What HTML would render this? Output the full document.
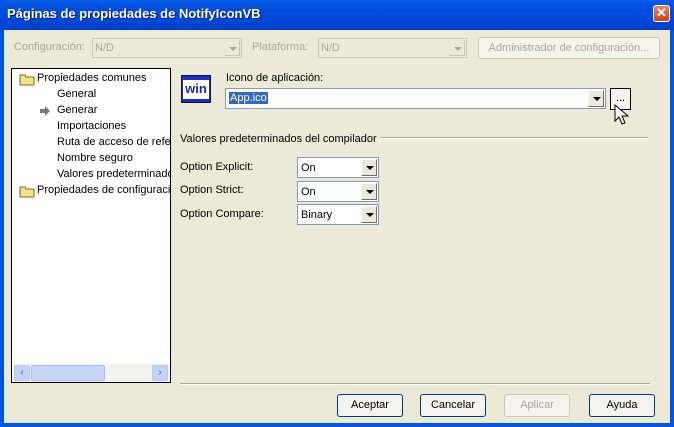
<!DOCTYPE html>
<html><head><meta charset="utf-8"><style>
*{margin:0;padding:0;box-sizing:border-box}
body{width:674px;height:427px;overflow:hidden;font-family:"Liberation Sans",sans-serif;font-size:11px;color:#000;background:#0054e3;position:relative}
.a{position:absolute}
.title{left:0;top:0;width:674px;height:30px;background:linear-gradient(#0a5fe8,#0151e0 20%,#0047d8 70%,#0040c8);border-radius:7px 7px 0 0}
.tt{left:7px;top:6px;color:#fff;font-weight:bold;font-size:13px;text-shadow:1px 1px #0a1e7a}
.close{left:653px;top:5px;width:17px;height:17px;background:linear-gradient(#e6866a,#c8421c);border:1px solid #fff;border-radius:3px;color:#fff;font-weight:bold;font-size:13px;text-align:center;line-height:14px}
.body{left:4px;top:30px;width:666px;height:393px;background:#ece9d8}
.combo{background:#fff;border:1px solid #7f9db9}
.dis{background:#ece9d8;border:1px solid #c9c7ba}
.arr{position:absolute;right:1px;top:1px;bottom:1px;width:16px;background:#ece9d8;border:1px solid;border-color:#fff #716f64 #716f64 #fff}
.arr:after{content:"";position:absolute;left:4px;top:6px;border:4px solid transparent;border-top:4px solid #000;border-bottom:0}
.arr.g:after{border-top-color:#aca899}
.btn{background:#f4f3ee;border:1px solid #003c74;border-radius:3px;text-align:center;line-height:21px}
.gray{color:#aca899}
.l{white-space:nowrap}
</style></head><body>
<div class="a title"></div>
<div class="a tt">Páginas de propiedades de NotifyIconVB</div>
<div class="a close">✕</div>
<div class="a body"></div>

<div class="a l gray" style="left:14px;top:41px">Configuración:</div>
<div class="a dis" style="left:92px;top:38px;width:150px;height:20px"><span class="a gray" style="left:2px;top:3px">N/D</span><div class="arr g" style="border-color:#e8e6dc #c9c7ba #c9c7ba #e8e6dc"></div></div>
<div class="a l gray" style="left:252px;top:41px">Plataforma:</div>
<div class="a dis" style="left:318px;top:38px;width:149px;height:20px"><span class="a gray" style="left:2px;top:3px">N/D</span><div class="arr g" style="border-color:#e8e6dc #c9c7ba #c9c7ba #e8e6dc"></div></div>
<div class="a btn gray" style="left:478px;top:37px;width:182px;height:22px;border-color:#c9c7ba;background:#f5f4ea">Administrador de configuración...</div>

<div class="a" style="left:11px;top:68px;width:160px;height:315px;background:#fff;border:1px solid #000;overflow:hidden">
 <svg class="a" style="left:7px;top:3px" width="16" height="14"><path d="M1 3h5l1 2h8v8H1z" fill="#f4e27a" stroke="#7a6a2a"/></svg>
 <div class="a l" style="left:25px;top:3px">Propiedades comunes</div>
 <div class="a l" style="left:45px;top:19px">General</div>
 <svg class="a" style="left:27px;top:37px" width="12" height="10"><path d="M1 3h5V0l5 5-5 5V7H1z" fill="#777"/></svg>
 <div class="a l" style="left:45px;top:35px">Generar</div>
 <div class="a l" style="left:45px;top:51px">Importaciones</div>
 <div class="a l" style="left:45px;top:67px">Ruta de acceso de referencia</div>
 <div class="a l" style="left:45px;top:83px">Nombre seguro</div>
 <div class="a l" style="left:45px;top:99px">Valores predeterminados</div>
 <svg class="a" style="left:7px;top:115px" width="16" height="14"><path d="M1 3h5l1 2h8v8H1z" fill="#f4e27a" stroke="#7a6a2a"/></svg>
 <div class="a l" style="left:25px;top:115px">Propiedades de configuración</div>
 <div class="a" style="left:1px;top:295px;width:156px;height:18px;background:#f3f3ee">
  <div class="a" style="left:1px;top:1px;width:16px;height:16px;background:#c1d3fb;border:1px solid #b7c9f0;border-radius:2px;color:#4d6185;font-size:10px;text-align:center;line-height:14px">‹</div>
  <div class="a" style="left:18px;top:1px;width:74px;height:16px;background:#c6d6fb;border:1px solid #a8bdf0;border-radius:2px"></div>
  <div class="a" style="left:139px;top:1px;width:16px;height:16px;background:#c1d3fb;border:1px solid #b7c9f0;border-radius:2px;color:#4d6185;font-size:10px;text-align:center;line-height:14px">›</div>
 </div>
</div>

<div class="a" style="left:181px;top:75px;width:30px;height:28px;background:#1c2ec0;border:1px solid #0a1060"></div>
<div class="a" style="left:183px;top:80px;width:26px;height:19px;background:#fff;color:#1a2aa8;font-weight:bold;font-size:13px;text-align:center;line-height:18px">win</div>
<div class="a l" style="left:226px;top:72px">Icono de aplicación:</div>
<div class="a combo" style="left:225px;top:88px;width:381px;height:21px"><span class="a" style="left:3px;top:3px;background:#316ac5;color:#fff;padding:0 1px">App.ico</span><div class="arr"></div></div>
<div class="a btn" style="left:610px;top:88px;width:21px;height:22px;border-color:#000;border-radius:0;line-height:18px">...</div>
<svg class="a" style="left:614px;top:104px" width="16" height="22"><path d="M1 1v16l4-4 3 7 3-1-3-7h6z" fill="#fff" stroke="#000"/></svg>

<div class="a l" style="left:180px;top:133px">Valores predeterminados del compilador</div>
<div class="a" style="left:380px;top:137px;width:268px;height:2px;border-top:1px solid #aca899;border-bottom:1px solid #fff"></div>

<div class="a l" style="left:180px;top:161px">Option Explicit:</div>
<div class="a l" style="left:180px;top:184px">Option Strict:</div>
<div class="a l" style="left:180px;top:208px">Option Compare:</div>
<div class="a combo" style="left:297px;top:157px;width:82px;height:21px"><span class="a" style="left:3px;top:4px">On</span><div class="arr"></div></div>
<div class="a combo" style="left:297px;top:181px;width:82px;height:21px"><span class="a" style="left:3px;top:4px">On</span><div class="arr"></div></div>
<div class="a combo" style="left:297px;top:204px;width:82px;height:21px"><span class="a" style="left:3px;top:4px">Binary</span><div class="arr"></div></div>

<div class="a" style="left:180px;top:383px;width:470px;height:2px;border-top:1px solid #aca899;border-bottom:1px solid #fff"></div>
<div class="a btn" style="left:337px;top:394px;width:66px;height:23px">Aceptar</div>
<div class="a btn" style="left:420px;top:394px;width:66px;height:23px">Cancelar</div>
<div class="a btn gray" style="left:504px;top:394px;width:66px;height:23px;border-color:#c9c7ba">Aplicar</div>
<div class="a btn" style="left:589px;top:394px;width:66px;height:23px">Ayuda</div>
</body></html>
